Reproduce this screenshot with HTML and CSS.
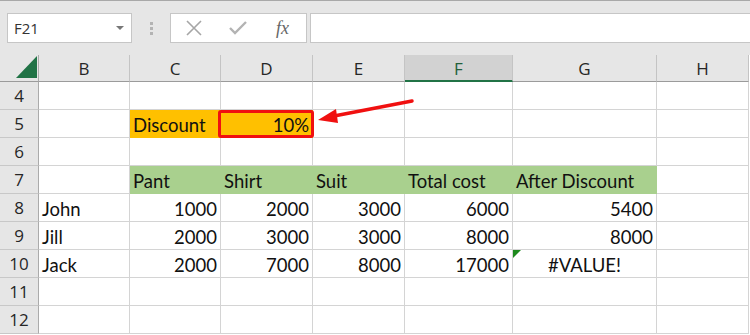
FILE: index.html
```html
<!DOCTYPE html>
<html>
<head lang="en">
    <meta charset="utf-8">
    <title>Discount sheet</title>
    <link rel="stylesheet" href="styles.css">
</head>
<body>
<div class="app">
    <div class="toolbar">
        <div class="namebox">F21<span class="caret"></span></div>
        <div class="grip"><i></i><i></i><i></i></div>
        <div class="fbuttons">
            <svg class="ico" width="18" height="18" viewBox="0 0 18 18"><path d="M2 2 L16 16 M16 2 L2 16" stroke="#a6a6a6" stroke-width="1.6" fill="none"/></svg>
            <svg class="ico" width="20" height="18" viewBox="0 0 20 18"><path d="M2 9 L7 14 L18 3" stroke="#b3b3b3" stroke-width="2.4" fill="none"/></svg>
            <span class="fx">fx</span>
        </div>
        <div class="formula"></div>
    </div>

    <div class="sheet">
        <div class="corner"><span class="tri"></span></div>
        <div class="colhead">B</div>
        <div class="colhead">C</div>
        <div class="colhead">D</div>
        <div class="colhead">E</div>
        <div class="colhead active">F</div>
        <div class="colhead">G</div>
        <div class="colhead">H</div>

        <div class="rowhead">4</div>
        <div class="cell"></div><div class="cell"></div><div class="cell"></div><div class="cell"></div><div class="cell"></div><div class="cell"></div><div class="cell"></div>

        <div class="rowhead">5</div>
        <div class="cell"></div>
        <div class="cell orange">Discount</div>
        <div class="cell orange num picked">10%</div>
        <div class="cell"></div><div class="cell"></div><div class="cell"></div><div class="cell"></div>

        <div class="rowhead">6</div>
        <div class="cell"></div><div class="cell"></div><div class="cell"></div><div class="cell"></div><div class="cell"></div><div class="cell"></div><div class="cell"></div>

        <div class="rowhead">7</div>
        <div class="cell"></div>
        <div class="cell green">Pant</div>
        <div class="cell green">Shirt</div>
        <div class="cell green">Suit</div>
        <div class="cell green">Total cost</div>
        <div class="cell green">After Discount</div>
        <div class="cell"></div>

        <div class="rowhead">8</div>
        <div class="cell">John</div>
        <div class="cell num">1000</div>
        <div class="cell num">2000</div>
        <div class="cell num">3000</div>
        <div class="cell num">6000</div>
        <div class="cell num">5400</div>
        <div class="cell"></div>

        <div class="rowhead">9</div>
        <div class="cell">Jill</div>
        <div class="cell num">2000</div>
        <div class="cell num">3000</div>
        <div class="cell num">3000</div>
        <div class="cell num">8000</div>
        <div class="cell num">8000</div>
        <div class="cell"></div>

        <div class="rowhead">10</div>
        <div class="cell">Jack</div>
        <div class="cell num">2000</div>
        <div class="cell num">7000</div>
        <div class="cell num">8000</div>
        <div class="cell num">17000</div>
        <div class="cell err flagged">#VALUE!</div>
        <div class="cell"></div>

        <div class="rowhead">11</div>
        <div class="cell"></div><div class="cell"></div><div class="cell"></div><div class="cell"></div><div class="cell"></div><div class="cell"></div><div class="cell"></div>

        <div class="rowhead">12</div>
        <div class="cell"></div><div class="cell"></div><div class="cell"></div><div class="cell"></div><div class="cell"></div><div class="cell"></div><div class="cell"></div>
    </div>

    <svg class="arrow" width="750" height="335" viewBox="0 0 750 335">
        <path d="M412 101 L334 116" stroke="#f01010" stroke-width="3.5" stroke-linecap="round" fill="none"/>
        <path d="M318 120 L336 109 L338 123 Z" fill="#f01010"/>
    </svg>
</div>
</body>
</html>
```

FILE: styles.css
```css
html, body {
    margin: 0;
    padding: 0;
}

body {
    background: #fff;
    font-family: "Open Sans", "Noto Sans", sans-serif;
}

.app {
    position: relative;
    width: 750px;
    height: 335px;
    overflow: hidden;
}

.toolbar {
    height: 55px;
    box-sizing: border-box;
    background: #e6e6e6;
    border-top: 1px solid #a8a8a8;
    display: flex;
    align-items: flex-start;
    padding-top: 12px;
    padding-left: 7px;
}

.namebox {
    width: 125px;
    height: 30px;
    box-sizing: border-box;
    background: #fff;
    border: 1px solid #c6c6c6;
    display: flex;
    align-items: center;
    padding-left: 6px;
    font-size: 15px;
    color: #333;
}

.caret {
    margin-left: auto;
    margin-right: 7px;
    border-left: 4px solid transparent;
    border-right: 4px solid transparent;
    border-top: 4px solid #777;
}

.grip {
    width: 38px;
    height: 30px;
    display: flex;
    flex-direction: column;
    align-items: center;
    justify-content: center;
    gap: 2px;
}

.grip i {
    width: 3px;
    height: 3px;
    background: #b3b3b3;
}

.fbuttons {
    width: 137px;
    height: 30px;
    box-sizing: border-box;
    background: #fff;
    border: 1px solid #c6c6c6;
    display: flex;
    align-items: center;
    padding-left: 14px;
    gap: 25px;
}

.fx {
    font-family: "Liberation Serif", "DejaVu Serif", serif;
    font-style: italic;
    font-size: 18px;
    color: #666;
    margin-left: 3px;
}

.formula {
    flex: 1;
    height: 30px;
    margin-left: 3px;
    box-sizing: border-box;
    background: #fff;
    border: 1px solid #c6c6c6;
    border-right: none;
}

.sheet {
    display: grid;
    grid-template-columns: 39px 91px 91px 92px 92px 108px 144px 92px;
    grid-template-rows: 27px repeat(9, 28px);
}

.corner {
    background: #e6e6e6;
    border-right: 1px solid #ababab;
    border-bottom: 1px solid #9b9b9b;
    position: relative;
}

.tri {
    position: absolute;
    left: 16px;
    top: 1px;
    width: 0;
    height: 0;
    border-left: 21px solid transparent;
    border-bottom: 22px solid #217346;
}

.colhead {
    background: #e6e6e6;
    border-right: 1px solid #c4c4c4;
    border-bottom: 1px solid #9b9b9b;
    display: flex;
    align-items: center;
    justify-content: center;
    font-size: 17px;
    color: #262626;
}

.colhead.active {
    background: #d2d2d2;
    border-bottom: 2px solid #217346;
    color: #22603b;
    padding-top: 1px;
}

.rowhead {
    background: #e6e6e6;
    border-right: 1px solid #ababab;
    border-bottom: 1px solid #c8c8c8;
    display: flex;
    align-items: center;
    justify-content: center;
    font-size: 17px;
    color: #262626;
}

.cell {
    border-right: 1px solid #d4d4d4;
    border-bottom: 1px solid #d4d4d4;
    font-family: Lato, "Open Sans", sans-serif;
    font-size: 18.5px;
    line-height: 28px;
    padding: 1px 3px 0 3px;
    color: #111;
    white-space: nowrap;
    position: relative;
}

.num {
    text-align: right;
}

.err {
    text-align: center;
}

.orange {
    background: #ffc000;
    border-right-color: #ffc000;
    border-bottom-color: #ffc000;
}

.green {
    background: #a9d08e;
    border-right-color: #a9d08e;
    border-bottom-color: #a9d08e;
}

.picked::after {
    content: "";
    position: absolute;
    top: 0;
    bottom: -1px;
    left: -3px;
    right: -2px;
    border: 3px solid #f01010;
    border-radius: 3px;
}

.flagged::before {
    content: "";
    position: absolute;
    left: 0;
    top: 0;
    border-top: 8px solid #1e8a1e;
    border-right: 8px solid transparent;
}

.arrow {
    position: absolute;
    left: 0;
    top: 0;
    pointer-events: none;
}
```
